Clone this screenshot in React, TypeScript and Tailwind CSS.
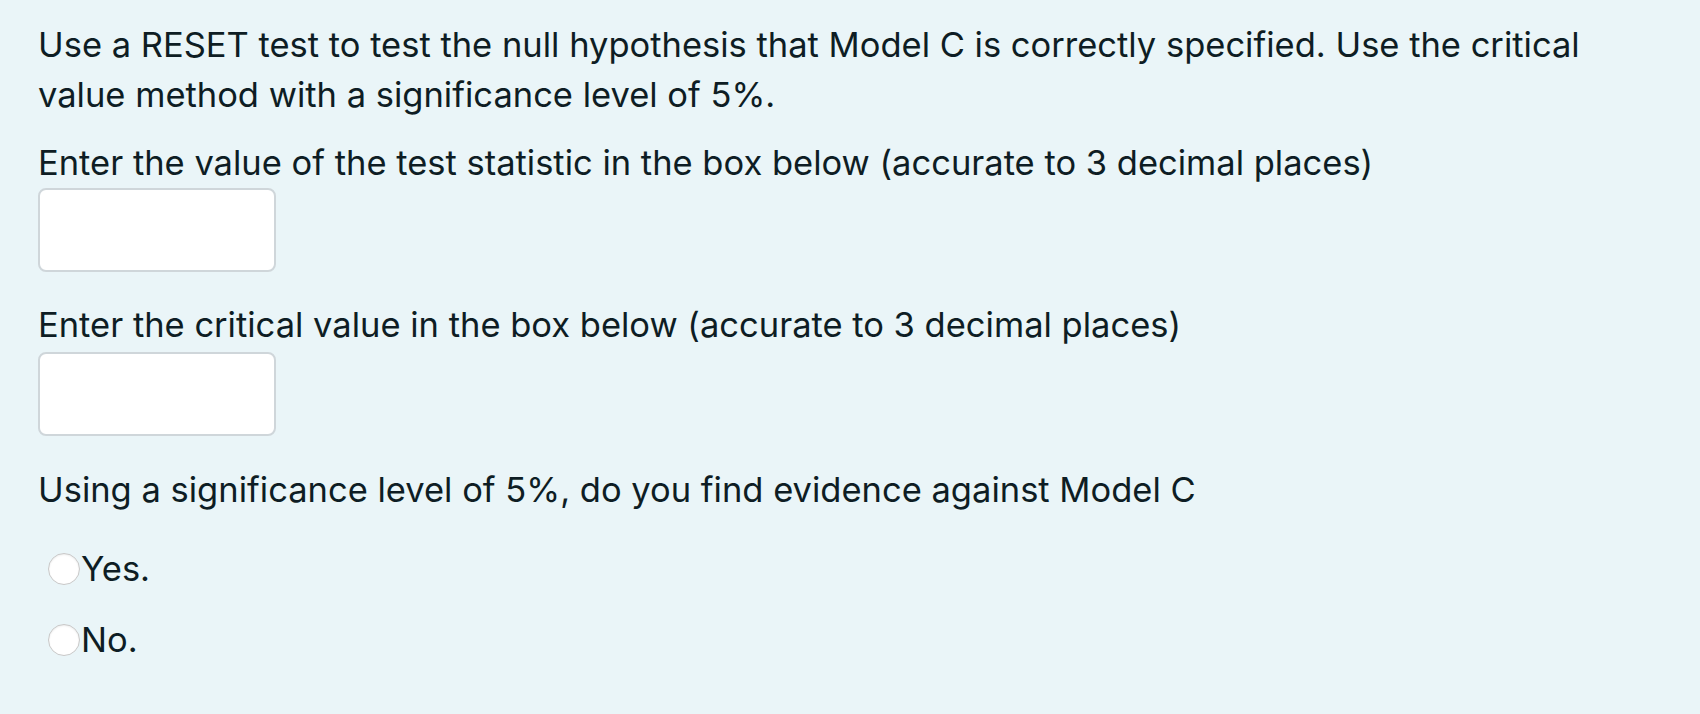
export default function App() {
  return (
    <div
      className="min-h-screen bg-[#eaf5f8] px-[38px] pt-[20px] text-[34.5px] leading-[50px] text-[#0e1d24]"
      style={{ fontFamily: 'Inter, "Noto Sans", sans-serif' }}
    >
      <p>
        Use a RESET test to test the null hypothesis that Model C is correctly specified. Use the critical value
        method with a significance level of 5%.
      </p>
      <p className="mt-[18px]">Enter the value of the test statistic in the box below (accurate to 3 decimal places)</p>
      <input
        type="text"
        className="block h-[84px] w-[238px] rounded-[8px] border-2 border-[#cfd6da] bg-white outline-none"
      />
      <p className="mt-[28px]">Enter the critical value in the box below (accurate to 3 decimal places)</p>
      <input
        type="text"
        className="mt-[2px] block h-[84px] w-[238px] rounded-[8px] border-2 border-[#cfd6da] bg-white outline-none"
      />
      <p className="mt-[29px]">Using a significance level of 5%, do you find evidence against Model C</p>
      <div className="mt-[29px] flex flex-col gap-[21px]">
        {['Yes.', 'No.'].map((label) => (
          <label key={label} className="flex items-center">
            <span className="ml-[10px] h-[32px] w-[32px] rounded-full border border-[#c8c8c8] bg-white shadow-[inset_0_1px_2px_rgba(0,0,0,0.08)]" />
            <span className="ml-[1px]">{label}</span>
          </label>
        ))}
      </div>
    </div>
  );
}
